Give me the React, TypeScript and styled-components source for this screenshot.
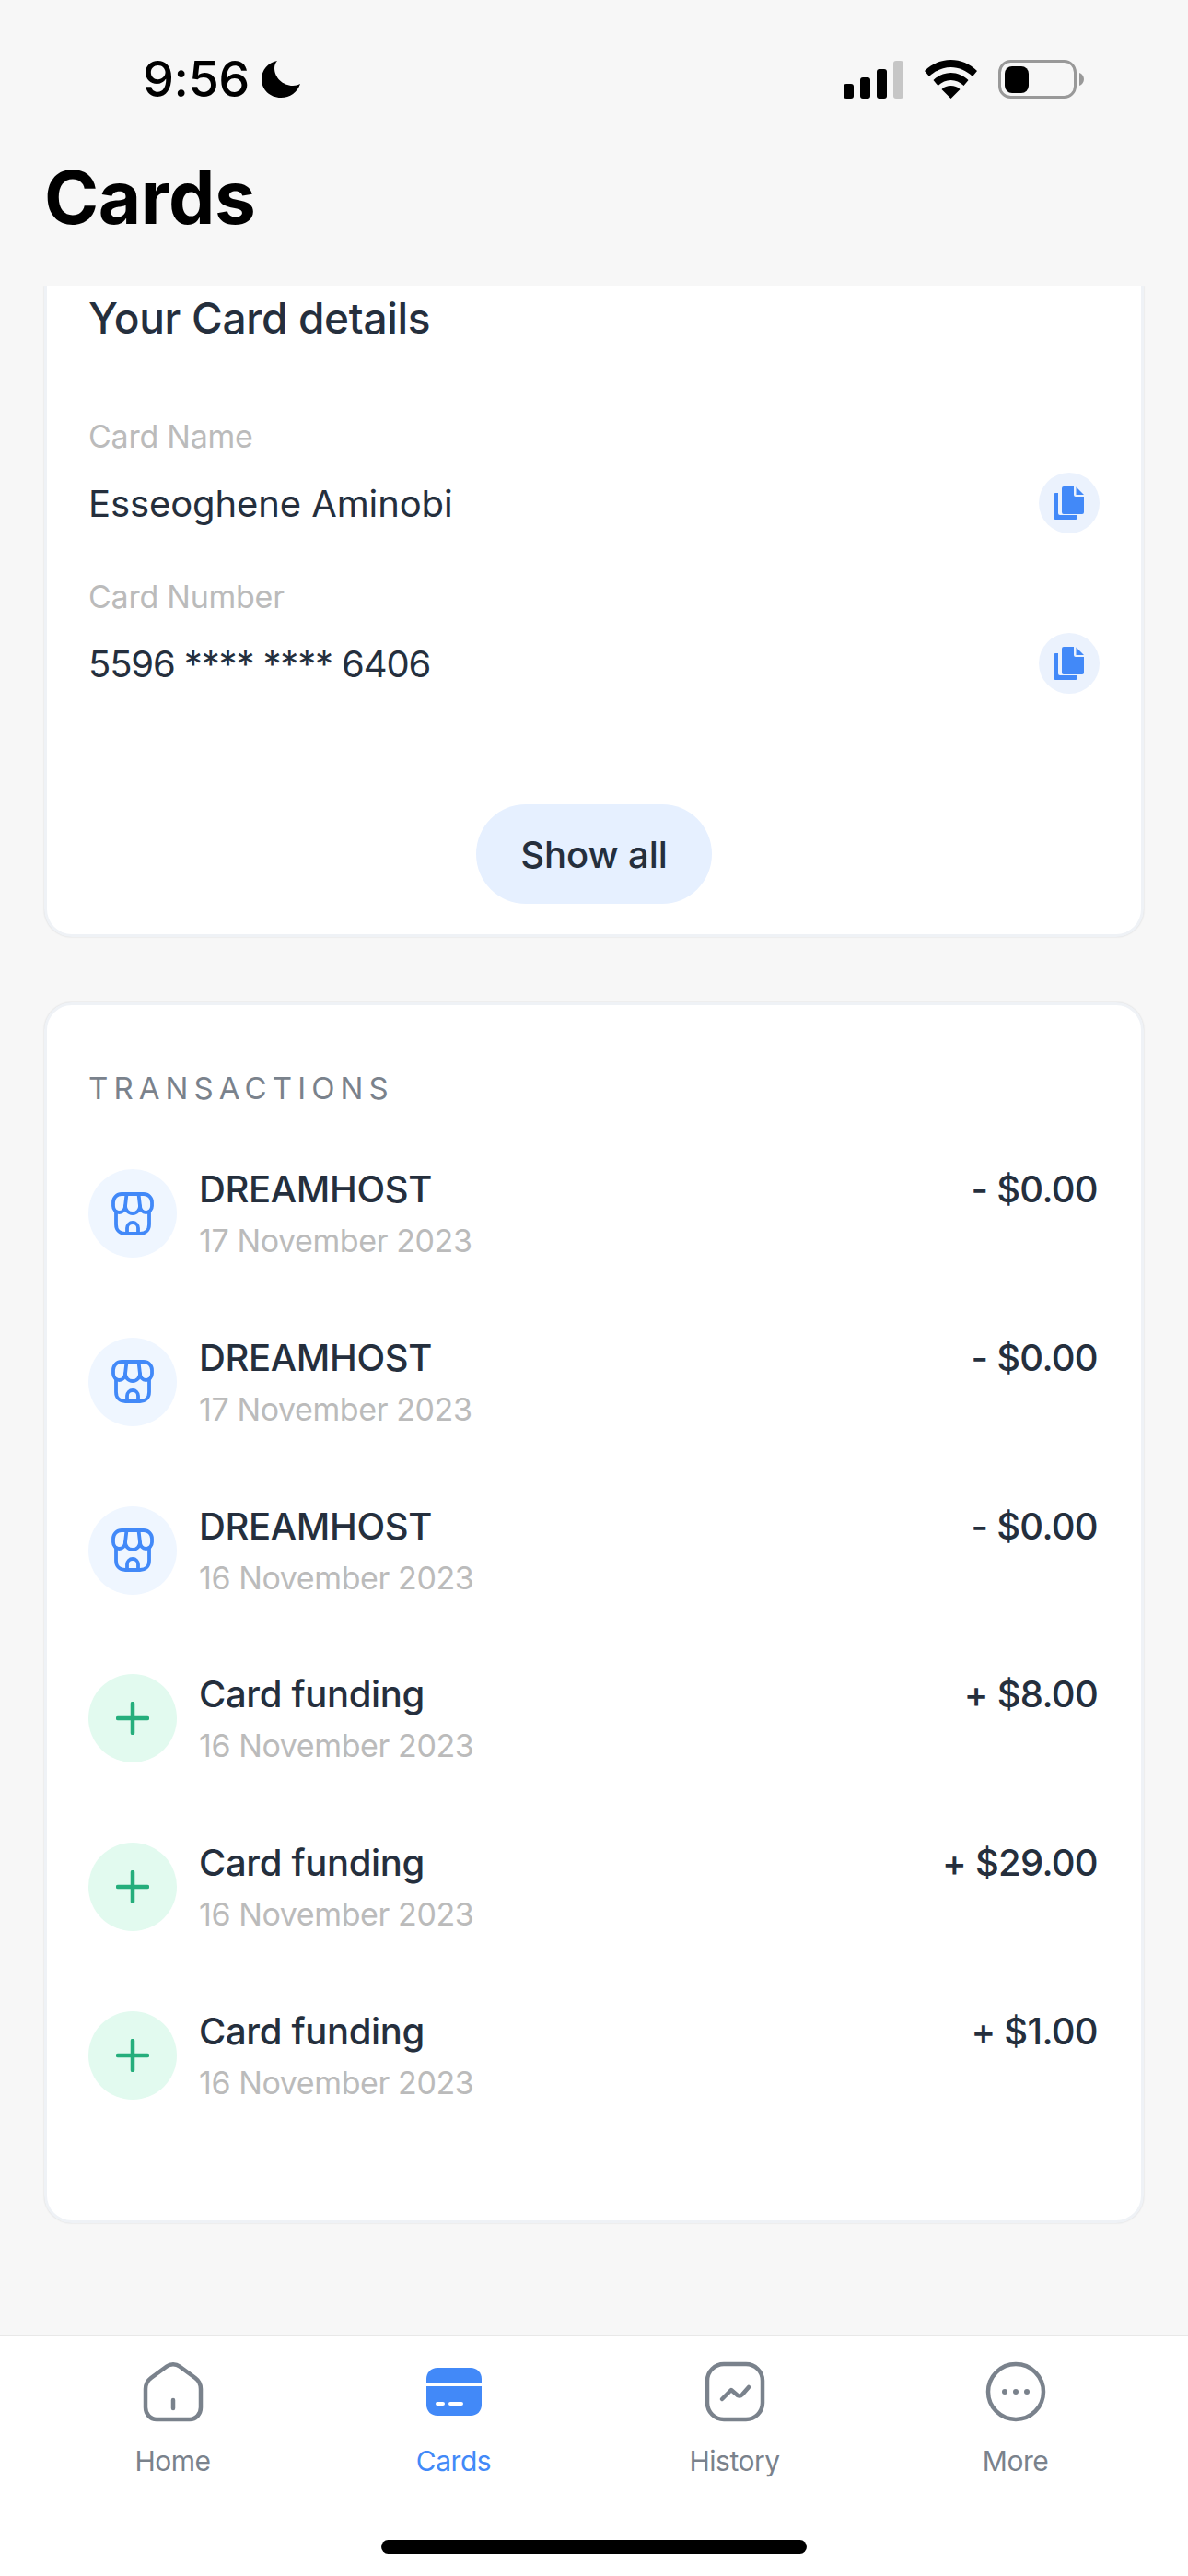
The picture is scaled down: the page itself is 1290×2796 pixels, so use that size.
import React from "react";
import styled, { createGlobalStyle } from "styled-components";

const Global = createGlobalStyle`
  html, body { margin: 0; padding: 0; background: #f7f7f7; }
  * { box-sizing: border-box; }
`;

const Screen = styled.div`
  width: 1290px;
  height: 2796px;
  display: flex;
  flex-direction: column;
  background: #f7f7f7;
  font-family: Inter, "Liberation Sans", sans-serif;
  color: #252f3d;
  overflow: hidden;
`;

const StatusBar = styled.div`
  display: flex;
  justify-content: space-between;
  align-items: center;
  height: 42px;
  margin-top: 65px;
  padding: 0 113px 0 155px;
`;
const TimeGroup = styled.div`
  display: flex;
  align-items: center;
  gap: 13px;
`;
const Time = styled.span`
  font-size: 54px;
  line-height: 42px;
  font-weight: 500;
  color: #000;
  letter-spacing: -0.5px;
`;
const StatusIcons = styled.div`
  display: flex;
  align-items: center;
  gap: 23px;
`;
const Title = styled.h1`
  margin: 60px 0 0;
  padding-left: 48px;
  height: 143px;
  font-size: 80px;
  line-height: 94px;
  font-weight: 700;
  letter-spacing: -0.4px;
  color: #000;
`;

const Main = styled.main`
  flex: 1;
  display: flex;
  flex-direction: column;
  gap: 71px;
  padding: 0 48px;
  overflow: hidden;
`;
const Card = styled.section<{ $clipped?: boolean }>`
  background: #fff;
  border: 3px solid #eff2f6;
  border-top-width: ${(p) => (p.$clipped ? 0 : 3)}px;
  border-radius: ${(p) => (p.$clipped ? "0 0 30px 30px" : "30px")};
  padding: ${(p) => (p.$clipped ? "7px 45px 33px" : "68px 45px 131px")};
  box-shadow: 0 0 2px rgba(0, 0, 0, 0.14);
  display: flex;
  flex-direction: column;
`;
const CardTitle = styled.h2`
  margin: 0 0 79px;
  font-size: 46px;
  line-height: 56px;
  font-weight: 500;
  letter-spacing: -0.3px;
`;
const Fields = styled.div`
  display: flex;
  flex-direction: column;
  gap: 47px;
`;
const Field = styled.div`
  display: flex;
  flex-direction: column;
  gap: 17px;
`;
const FieldLabel = styled.div`
  font-size: 34px;
  line-height: 44px;
  color: #bbbbbb;
  letter-spacing: -0.25px;
`;
const FieldRow = styled.div<{ $tight?: boolean }>`
  display: flex;
  align-items: center;
  justify-content: space-between;
  height: 66px;
  font-size: 40px;
  letter-spacing: ${(p) => (p.$tight ? "-1.15px" : "-0.1px")};
`;
const CopyButton = styled.div`
  width: 66px;
  height: 66px;
  border-radius: 50%;
  background: #ebf2fd;
  display: flex;
  align-items: center;
  justify-content: center;
`;
const ShowAll = styled.div`
  align-self: center;
  margin-top: 120px;
  width: 256px;
  height: 108px;
  border-radius: 54px;
  background: #e6f0ff;
  display: flex;
  align-items: center;
  justify-content: center;
  font-size: 40px;
  font-weight: 500;
  letter-spacing: -0.1px;
`;
const SectionLabel = styled.div`
  font-size: 33px;
  line-height: 44px;
  letter-spacing: 6.1px;
  color: #7a828c;
`;
const TxList = styled.div`
  margin-top: 66px;
  display: flex;
  flex-direction: column;
  gap: 86.8px;
`;
const TxRow = styled.div`
  display: flex;
  align-items: flex-start;
  height: 96px;
  gap: 24px;
`;
const TxIcon = styled.div<{ $tone: "blue" | "green" }>`
  flex: none;
  width: 96px;
  height: 96px;
  border-radius: 50%;
  background: ${(p) => (p.$tone === "blue" ? "#eff6ff" : "#e2faef")};
  display: flex;
  align-items: center;
  justify-content: center;
`;
const TxText = styled.div`
  flex: 1;
  display: flex;
  flex-direction: column;
  margin-top: -2px;
`;
const TxName = styled.div`
  font-size: 40px;
  line-height: 48px;
  font-weight: 500;
  letter-spacing: -0.35px;
`;
const TxDate = styled.div`
  margin-top: 10px;
  font-size: 34px;
  line-height: 44px;
  color: #bbbbbb;
  letter-spacing: -0.4px;
`;
const TxAmount = styled.div`
  margin: -2px 2px 0 0;
  font-size: 40px;
  line-height: 48px;
  font-weight: 500;
  letter-spacing: -0.7px;
`;

const TabBar = styled.nav`
  flex: none;
  height: 262px;
  background: #fff;
  border-top: 2px solid #e8e8e8;
  display: flex;
  flex-direction: column;
  padding: 26px 35px 24px;
`;
const Tabs = styled.div`
  flex: 1;
  display: grid;
  grid-template-columns: repeat(4, 305px);
`;
const Tab = styled.div<{ $active?: boolean }>`
  display: flex;
  flex-direction: column;
  align-items: center;
  font-size: 30px;
  line-height: 40px;
  letter-spacing: -0.5px;
  color: ${(p) => (p.$active ? "#4289f8" : "#7a828c")};
`;
const TabIconBox = styled.div`
  width: 68px;
  height: 68px;
  margin-bottom: 21px;
  display: flex;
  align-items: center;
  justify-content: center;
`;
const HomeIndicator = styled.div`
  align-self: center;
  width: 462px;
  height: 15px;
  border-radius: 8px;
  background: #000;
`;

const Moon = () => (
  <svg width="43" height="42" viewBox="0 0 43 42">
    <path d="M17 1C7 3 0 11 0 21c0 11 9 20 21 20 10 0 18-6 21-15-2 1-5 2-8 2C23 28 14 19 14 9c0-3 1-6 3-8z" fill="#000" />
  </svg>
);
const Signal = () => (
  <svg width="65" height="42" viewBox="0 0 65 42">
    <rect x="0" y="26" width="11" height="16" rx="3" fill="#000" />
    <rect x="18" y="19" width="11" height="23" rx="3" fill="#000" />
    <rect x="36" y="10" width="11" height="32" rx="3" fill="#000" />
    <rect x="54" y="1" width="11" height="41" rx="3" fill="#c6c6c6" />
  </svg>
);
const Wifi = () => (
  <svg width="57" height="42" viewBox="0 0 57 42">
    <path d="M28.500 0C18 0 8 4 0 12l5 6c6-6 15-10 23.500-10S46 12 52 18l5-6C49 4 39 0 28.500 0z" fill="#000" />
    <path d="M28.500 14c-7 0-14 3-19 8l5 6c4-4 9-6 14-6s10 2 14 6l5-6c-5-5-12-8-19-8z" fill="#000" />
    <path d="M28.500 28c-4 0-7 1-10 4l10 10 10-10c-3-3-6-4-10-4z" fill="#000" />
  </svg>
);
const Battery = () => (
  <svg width="93" height="42" viewBox="0 0 93 42">
    <rect x="1.500" y="1.500" width="82" height="39" rx="12" fill="none" stroke="#999" strokeWidth="3" />
    <rect x="7" y="7" width="26" height="29" rx="8" fill="#000" />
    <path d="M88 14c3 1 5 4 5 7s-2 6-5 7z" fill="#999" />
  </svg>
);
const CopyIcon = () => (
  <svg width="34" height="36" viewBox="0 0 34 36">
    <path d="M2 7h3v22a2 2 0 0 0 2 2h19v3a2 2 0 0 1-2 2H2a2 2 0 0 1-2-2V9a2 2 0 0 1 2-2z" fill="#4289f8" />
    <path d="M11 0h11v9a2 2 0 0 0 2 2h9v17a2 2 0 0 1-2 2H11a2 2 0 0 1-2-2V2a2 2 0 0 1 2-2z" fill="#4289f8" />
    <path d="M24.500 0.500L33 9h-8.500z" fill="#4289f8" />
  </svg>
);
const StoreIcon = () => (
  <svg width="46" height="47" viewBox="0 0 46 47" fill="none" stroke="#4289f8" strokeWidth="3.800" strokeLinejoin="round" strokeLinecap="round">
    <path d="M11 2h24c5 0 9 4 9 9v4c0 4-3 7-6.500 7S31 19 31 15c0 4-3 8-8 8s-8-4-8-8c0 4-3 7-6.500 7S2 19 2 15v-4c0-5 4-9 9-9z" />
    <path d="M15 15l1.500-13M31 15L29.500 2" />
    <path d="M5 21v14c0 6 4 10 10 10h16c6 0 10-4 10-10V21" />
    <path d="M17 45v-6a6 6 0 0 1 12 0v6" />
  </svg>
);
const PlusIcon = () => (
  <svg width="36" height="36" viewBox="0 0 36 36" fill="none" stroke="#25ae7c" strokeWidth="4.500" strokeLinecap="round">
    <path d="M18 2v32M2 18h32" />
  </svg>
);
const HomeIcon = () => (
  <svg width="66" height="66" viewBox="0 0 66 66" fill="none" stroke="#7a828c" strokeWidth="4.500" strokeLinecap="round" strokeLinejoin="round">
    <path d="M26 5.500c4-3 10-3 14 0l17 12.500c4 3 6 7 6 12v20c0 7-5 13-12 13H15C8 63 3 57 3 50V30c0-5 2-9 6-12z" />
    <path d="M33 42v9" />
  </svg>
);
const CardIcon = () => (
  <svg width="60" height="52" viewBox="0 0 60 52">
    <path d="M12 0h36c7 0 12 5 12 12v4H0v-4C0 5 5 0 12 0z" fill="#4289f8" />
    <path d="M0 20h60v20c0 7-5 12-12 12H12C5 52 0 47 0 40z" fill="#4289f8" />
    <path d="M12 39h6M26 39h12" stroke="#fff" strokeWidth="4" strokeLinecap="round" />
  </svg>
);
const HistoryIcon = () => (
  <svg width="66" height="66" viewBox="0 0 66 66" fill="none" stroke="#7a828c" strokeWidth="4.500" strokeLinecap="round" strokeLinejoin="round">
    <rect x="3" y="3" width="60" height="60" rx="18" />
    <path d="M19 41l10-10 7 6c2 1 3 1 5-1l7-8" />
  </svg>
);
const MoreIcon = () => (
  <svg width="66" height="66" viewBox="0 0 66 66" fill="none">
    <circle cx="33" cy="33" r="30" stroke="#7a828c" strokeWidth="4.500" />
    <circle cx="21" cy="33" r="3" fill="#7a828c" />
    <circle cx="33" cy="33" r="3" fill="#7a828c" />
    <circle cx="45" cy="33" r="3" fill="#7a828c" />
  </svg>
);

const txs = [
  { name: "DREAMHOST", date: "17 November 2023", amount: "- $0.00", kind: "blue" as const },
  { name: "DREAMHOST", date: "17 November 2023", amount: "- $0.00", kind: "blue" as const },
  { name: "DREAMHOST", date: "16 November 2023", amount: "- $0.00", kind: "blue" as const },
  { name: "Card funding", date: "16 November 2023", amount: "+ $8.00", kind: "green" as const },
  { name: "Card funding", date: "16 November 2023", amount: "+ $29.00", kind: "green" as const },
  { name: "Card funding", date: "16 November 2023", amount: "+ $1.00", kind: "green" as const },
];

export default function App() {
  return (
    <Screen>
      <Global />
      <StatusBar>
        <TimeGroup>
          <Time>9:56</Time>
          <Moon />
        </TimeGroup>
        <StatusIcons>
          <Signal />
          <Wifi />
          <Battery />
        </StatusIcons>
      </StatusBar>
      <Title>Cards</Title>
      <Main>
        <Card $clipped>
          <CardTitle>Your Card details</CardTitle>
          <Fields>
            <Field>
              <FieldLabel>Card Name</FieldLabel>
              <FieldRow>
                Esseoghene Aminobi
                <CopyButton><CopyIcon /></CopyButton>
              </FieldRow>
            </Field>
            <Field>
              <FieldLabel>Card Number</FieldLabel>
              <FieldRow $tight>
                5596 **** **** 6406
                <CopyButton><CopyIcon /></CopyButton>
              </FieldRow>
            </Field>
          </Fields>
          <ShowAll>Show all</ShowAll>
        </Card>
        <Card>
          <SectionLabel>TRANSACTIONS</SectionLabel>
          <TxList>
            {txs.map((t, i) => (
              <TxRow key={i}>
                <TxIcon $tone={t.kind}>{t.kind === "blue" ? <StoreIcon /> : <PlusIcon />}</TxIcon>
                <TxText>
                  <TxName>{t.name}</TxName>
                  <TxDate>{t.date}</TxDate>
                </TxText>
                <TxAmount>{t.amount}</TxAmount>
              </TxRow>
            ))}
          </TxList>
        </Card>
      </Main>
      <TabBar>
        <Tabs>
          <Tab><TabIconBox><HomeIcon /></TabIconBox>Home</Tab>
          <Tab $active><TabIconBox><CardIcon /></TabIconBox>Cards</Tab>
          <Tab><TabIconBox><HistoryIcon /></TabIconBox>History</Tab>
          <Tab><TabIconBox><MoreIcon /></TabIconBox>More</Tab>
        </Tabs>
        <HomeIndicator />
      </TabBar>
    </Screen>
  );
}
